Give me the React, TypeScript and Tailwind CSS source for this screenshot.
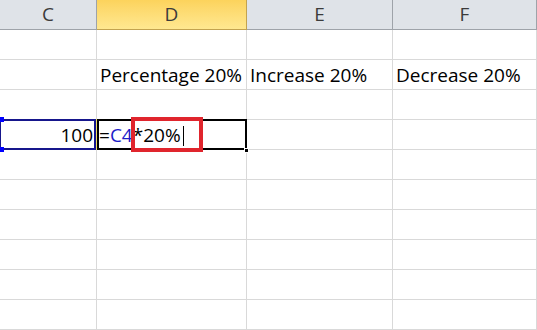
const cols = [
  { name: 'C', w: 'w-[97px]' },
  { name: 'D', w: 'w-[150px]' },
  { name: 'E', w: 'w-[146px]' },
  { name: 'F', w: 'w-[144px]' },
];

const font = { fontFamily: '"Open Sans", Lato, sans-serif' };

function Row({ children }: { children?: React.ReactNode[] }) {
  return (
    <div className="flex h-[30px]">
      {cols.map((c, i) => (
        <div
          key={c.name}
          className={`${c.w} h-full border-r border-b border-[#d9d9d9] flex items-center overflow-visible whitespace-nowrap`}
        >
          {children?.[i]}
        </div>
      ))}
    </div>
  );
}

export default function App() {
  return (
    <div className="w-[537px] h-[330px] bg-white overflow-hidden relative text-[19px] leading-none text-black" style={font}>
      {/* column headers */}
      <div className="flex h-[30px]">
        {cols.map((c) =>
          c.name === 'D' ? (
            <div
              key={c.name}
              className={`${c.w} h-full flex items-center justify-center bg-gradient-to-b from-[#fcd35c] to-[#ffe890] border-r border-b border-[#c3a34f] text-[#3b3b3b]`}
            >
              {c.name}
            </div>
          ) : (
            <div
              key={c.name}
              className={`${c.w} h-full flex items-center justify-center bg-[#dfe3e8] border-r border-b border-[#9ea3a9] text-[#3b3b3b]`}
            >
              {c.name}
            </div>
          )
        )}
      </div>

      <Row />
      <Row>
        {[
          null,
          <span key="d" className="pl-[3px] pt-[2px]">Percentage 20%</span>,
          <span key="e" className="pl-[3px] pt-[2px]">Increase 20%</span>,
          <span key="f" className="pl-[3px] pt-[2px]">Decrease 20%</span>,
        ]}
      </Row>
      <Row />
      <Row>
        {[
          <span key="c" className="w-full text-right pr-[3px] pt-[2px]">100</span>,
          <span key="d" className="pl-[2px] pt-[2px] flex items-center">
            =<span className="text-[#1c1cc8]">C4</span>*20%
            <span className="inline-block w-px h-[20px] bg-black ml-[2px]" />
          </span>,
          null,
          null,
        ]}
      </Row>
      <Row />
      <Row />
      <Row />
      <Row />
      <Row />
      <Row />

      {/* C4 reference highlight */}
      <div className="absolute left-0 top-[119px] w-[96px] h-[31px] border-2 border-[#16168c] border-l-[1px]" />
      <div className="absolute left-0 top-[117px] w-[4px] h-[5px] bg-[#0000ff]" />
      <div className="absolute left-0 top-[147px] w-[4px] h-[5px] bg-[#0000ff]" />
      <div className="absolute left-[96px] top-[119px] w-px h-[31px] bg-[#f0e060]" />
      {/* D4 active cell */}
      <div className="absolute left-[97px] top-[119px] w-[150px] h-[31px] border-2 border-black" />
      <div className="absolute left-[244px] top-[148px] w-[5px] h-[5px] bg-black border border-white" />
      {/* red highlight */}
      <div className="absolute left-[131px] top-[117px] w-[72px] h-[35px] border-4 border-[#e0252d]" />
    </div>
  );
}
